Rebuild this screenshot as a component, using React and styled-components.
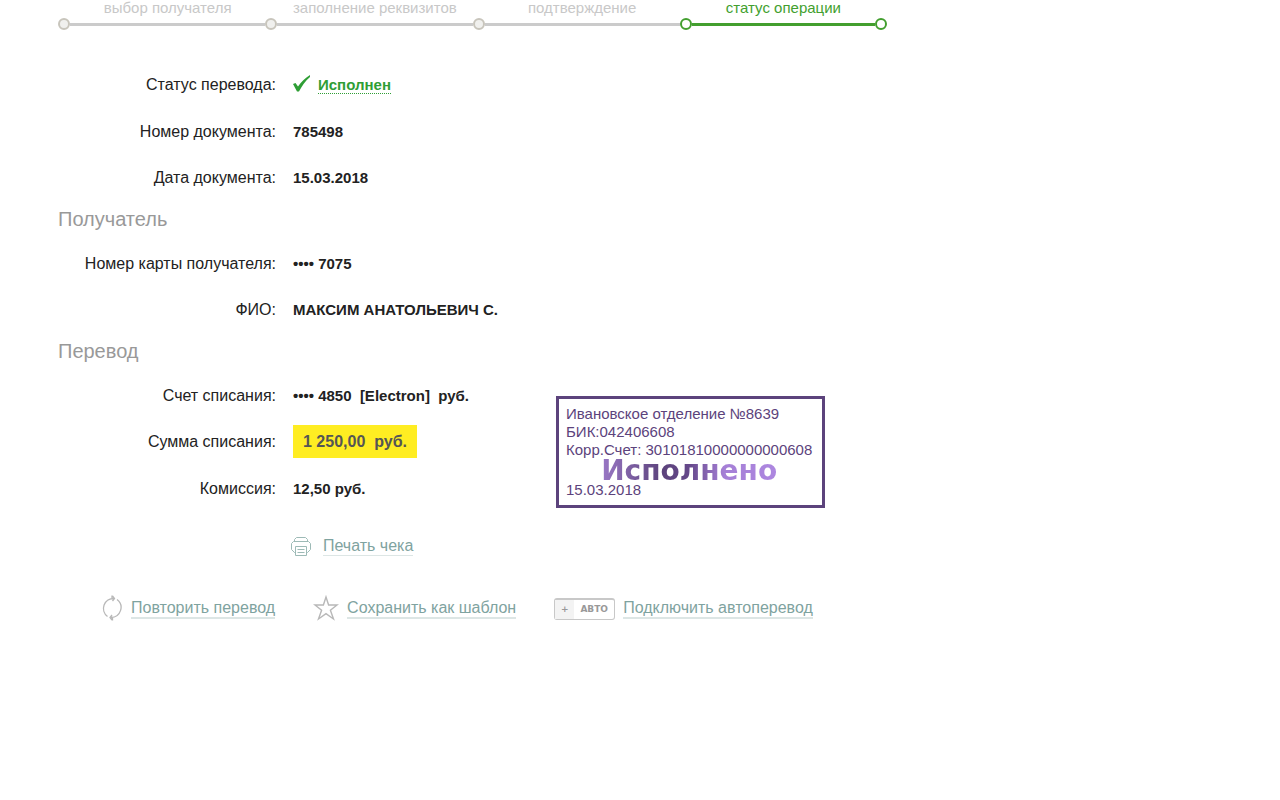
import React from "react";
import styled, { createGlobalStyle } from "styled-components";

const GlobalStyle = createGlobalStyle`
  * {
    box-sizing: border-box;
  }

  body {
    margin: 0;
    background: #fff;
    color: #222;
    font-family: "Liberation Sans", Arial, sans-serif;
    font-size: 16px;
  }
`;

const Page = styled.main`
  max-width: 887px;
  padding-left: 58px;
`;

const Steps = styled.ol`
  display: grid;
  grid-template-columns: repeat(4, 1fr);
  margin: 0;
  padding: 0;
  list-style: none;
`;

const Step = styled.li`
  color: ${({ $active }) => ($active ? "#439f2f" : "#c8c8c8")};
`;

const StepName = styled.div`
  padding-left: ${({ $active }) => ($active ? "0" : "12px")};
  font-size: 15px;
  line-height: 16px;
  text-align: center;
`;

const Track = styled.div`
  display: flex;
  align-items: center;
  padding-top: 2px;
`;

const Dot = styled.span`
  width: 12px;
  height: 12px;
  border: 2px solid ${({ $active }) => ($active ? "#439f2f" : "#c8c5bc")};
  border-radius: 50%;
  background: ${({ $active }) => ($active ? "#fff" : "#f0f0ee")};
`;

const Line = styled.span`
  flex: 1;
  height: 3px;
  background: ${({ $active }) => ($active ? "#439f2f" : "#cbcbcb")};
`;

const Details = styled.div`
  padding-top: 31px;
`;

const Fields = styled.dl`
  margin: 0;
`;

const FieldRow = styled.div`
  display: grid;
  grid-template-columns: 218px 1fr;
  column-gap: 17px;
  align-items: center;
  min-height: ${({ $tall }) => ($tall ? "48px" : "46px")};
`;

const FieldName = styled.dt`
  text-align: right;
  white-space: nowrap;
`;

const FieldValue = styled.dd`
  display: flex;
  align-items: center;
  margin: 0;
  padding-bottom: 2px;
  font-size: 15px;
  font-weight: bold;
  white-space: pre;
`;

const SectionTitle = styled.h2`
  margin: 0;
  padding-bottom: 4px;
  color: #999;
  font-size: 20px;
  font-weight: normal;
  line-height: 36px;
`;

const StatusLink = styled.a`
  margin-left: 8px;
  padding-top: 2px;
  border-bottom: 1px dotted #2f9e35;
  color: #2f9e35;
  text-decoration: none;
`;

const Amount = styled.span`
  padding: 0 10px;
  background: #ffed22;
  color: #555;
  font-size: 16px;
  line-height: 33px;
`;

const Transfer = styled.div`
  display: flex;
  align-items: flex-start;

  ${Fields} {
    flex: 0 1 498px;
  }
`;

const Stamp = styled.div`
  margin-top: 23px;
  padding: 6px 10px 6px 7px;
  border: 3px solid #5c437c;
  color: #5c437c;
  font-size: 15px;
  line-height: 18px;
  white-space: nowrap;
`;

const StampMark = styled.div`
  padding-top: 2px;
  font-family: "DejaVu Sans", Verdana, sans-serif;
  font-size: 28px;
  font-weight: bold;
  line-height: 20px;
  text-align: center;

  span {
    background: linear-gradient(90deg, #9a78c6, #5c437c 35%, #65488a 50%, #a57fd6 70%, #ad87e0);
    background-clip: text;
    color: transparent;
  }
`;

const PrintRow = styled.div`
  display: flex;
  align-items: center;
  min-height: 46px;
  margin-top: 10px;
  padding-left: 233px;
`;

const Actions = styled.nav`
  display: flex;
  gap: 38px;
  align-items: center;
  min-height: 46px;
  margin-top: 16px;
  padding-left: 43px;
`;

const ActionLink = styled.a`
  display: flex;
  gap: ${({ $wide }) => ($wide ? "12px" : "8px")};
  align-items: center;
  color: #7fa3a0;
  text-decoration: none;
  white-space: nowrap;
`;

const ActionText = styled.span`
  padding-top: ${({ $thin }) => ($thin ? "0" : "2px")};
  border-bottom: ${({ $thin }) => ($thin ? "1px" : "2px")} solid #dde6e5;
`;

const AutoBadge = styled.span`
  display: flex;
  width: 61px;
  height: 22px;
  margin-top: 2px;
  border: 1px solid #c8c8c8;
  border-top-width: 2px;
  border-radius: 3px;
  color: #999;
  font-family: "DejaVu Sans", Verdana, sans-serif;
  font-size: 9px;
  font-weight: bold;
  line-height: 19px;
  text-align: center;
`;

const AutoPlus = styled.span`
  width: 19px;
  background: #f3f3f3;
`;

const AutoText = styled.span`
  flex: 1;
`;

const CheckIcon = () => (
  <svg width="17" height="18" viewBox="0 0 17 18" aria-hidden="true">
    <path d="M0 9l2.500-1L5 11.500C8 7 12 3 17 0v2C12 6 9 11 6 16.500H4z" fill="#2f9e35" />
  </svg>
);

const PrinterIcon = () => (
  <svg width="20" height="19" viewBox="0 0 20 19" fill="none" stroke="#9dbab6" aria-hidden="true">
    <path d="M3.500 4.500v-2l2-2h9l2 2v2M4.500 15.500h-1l-3-3v-6l2-2h15l2 2v6l-3 3h-1" />
    <path d="M4.500 9.500h11v9h-11zM6.500 12.500h7M6.500 15.500h7" />
  </svg>
);

const RepeatIcon = () => (
  <svg width="22" height="26" viewBox="0 0 22 26" fill="none" stroke="#b8b8b8" strokeWidth="1.3" aria-hidden="true">
    <path d="M6.500 21.500A10 10 0 0 1 13 3.500M11 .5v3M11.500 1l2 2.500-2 2.500" />
    <path d="M16 4.500A10 10 0 0 1 10 22.500M11.500 25.500v-3M11 20l-2 2.500 2 2.500" />
  </svg>
);

const StarIcon = () => (
  <svg width="26" height="26" viewBox="0 0 26 26" fill="none" stroke="#b8b8b8" strokeWidth="1.4" aria-hidden="true">
    <path d="M13 2l2.600 8H24l-6.600 5.200L20.500 24 13 18.600 5.500 24l3.100-8.800L2 10h8.400z" />
  </svg>
);

const steps = [
  "выбор получателя",
  "заполнение реквизитов",
  "подтверждение",
  "статус операции",
];

const Field = ({ name, tall, children }) => (
  <FieldRow $tall={tall}>
    <FieldName>{name}:</FieldName>
    <FieldValue>{children}</FieldValue>
  </FieldRow>
);

const App = () => {
  return (
    <>
      <GlobalStyle />
      <Page>
        <Steps>
          {steps.map((step, i) => {
            const active = i === steps.length - 1;
            return (
              <Step key={step} $active={active} aria-current={active ? "step" : undefined}>
                <StepName $active={active}>{step}</StepName>
                <Track>
                  <Dot $active={active} />
                  <Line $active={active} />
                  {active && <Dot $active />}
                </Track>
              </Step>
            );
          })}
        </Steps>

        <Details>
          <Fields>
            <Field name="Статус перевода" tall>
              <CheckIcon />
              <StatusLink href="#status">Исполнен</StatusLink>
            </Field>
            <Field name="Номер документа">785498</Field>
            <Field name="Дата документа">15.03.2018</Field>
          </Fields>

          <SectionTitle>Получатель</SectionTitle>
          <Fields>
            <Field name="Номер карты получателя">•••• 7075</Field>
            <Field name="ФИО">МАКСИМ АНАТОЛЬЕВИЧ С.</Field>
          </Fields>

          <SectionTitle>Перевод</SectionTitle>
          <Transfer>
            <Fields>
              <Field name="Счет списания">{"•••• 4850  [Electron]  руб."}</Field>
              <Field name="Сумма списания">
                <Amount>{"1 250,00  руб."}</Amount>
              </Field>
              <Field name="Комиссия" tall>
                12,50 руб.
              </Field>
            </Fields>
            <Stamp>
              <div>Ивановское отделение №8639</div>
              <div>БИК:042406608</div>
              <div>Корр.Счет: 30101810000000000608</div>
              <StampMark>
                <span>Исполнено</span>
              </StampMark>
              <div>15.03.2018</div>
            </Stamp>
          </Transfer>
        </Details>

        <PrintRow>
          <ActionLink href="#print" $wide>
            <PrinterIcon />
            <ActionText $thin>Печать чека</ActionText>
          </ActionLink>
        </PrintRow>

        <Actions>
          <ActionLink href="#repeat">
            <RepeatIcon />
            <ActionText>Повторить перевод</ActionText>
          </ActionLink>
          <ActionLink href="#template">
            <StarIcon />
            <ActionText>Сохранить как шаблон</ActionText>
          </ActionLink>
          <ActionLink href="#auto">
            <AutoBadge>
              <AutoPlus>+</AutoPlus>
              <AutoText>АВТО</AutoText>
            </AutoBadge>
            <ActionText>Подключить автоперевод</ActionText>
          </ActionLink>
        </Actions>
      </Page>
    </>
  );
};

export default App;
